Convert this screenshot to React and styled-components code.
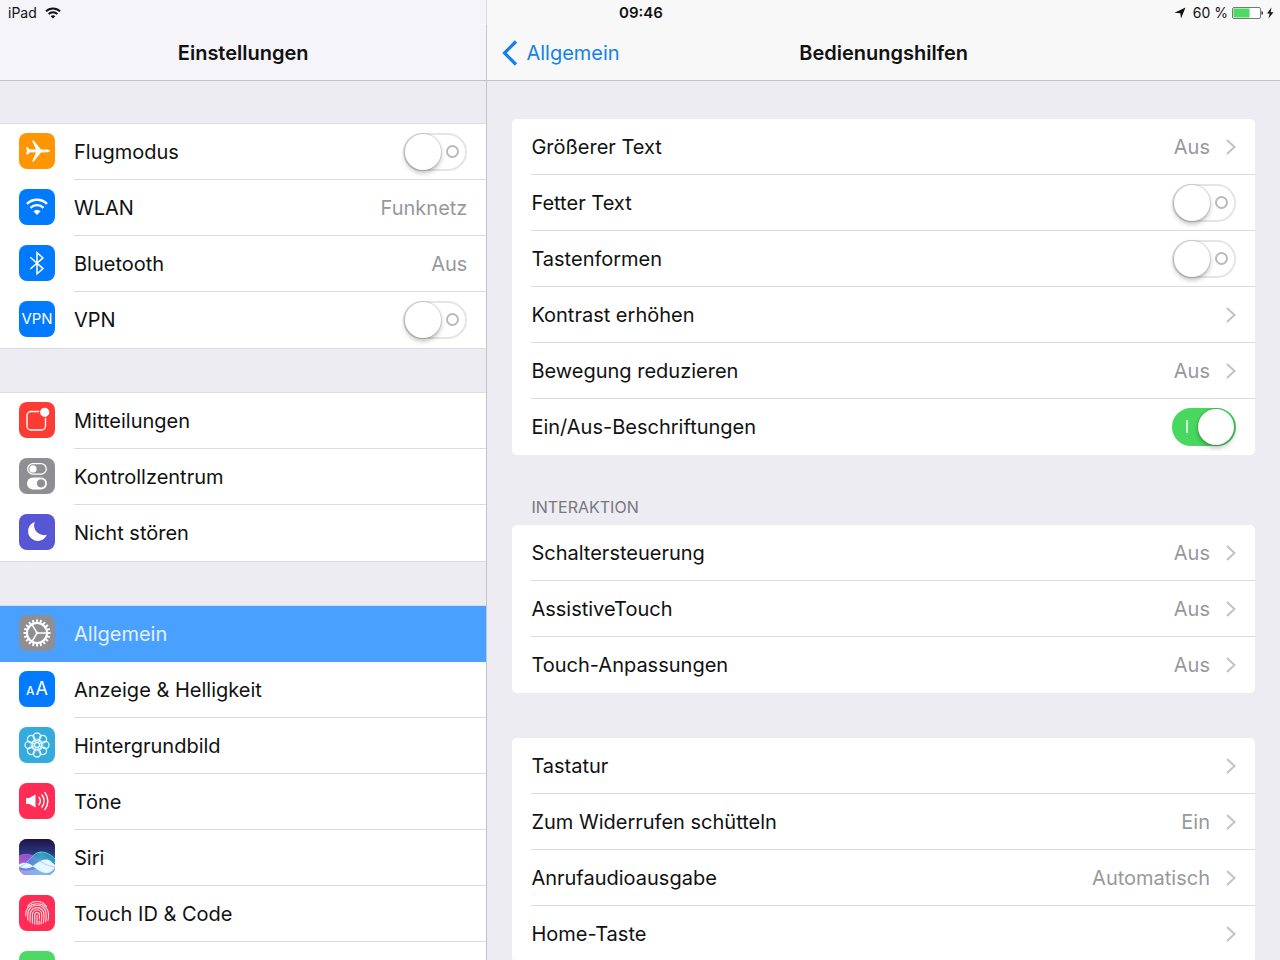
import React, { useState } from 'react';
import styled, { createGlobalStyle, css } from 'styled-components';

const GlobalStyle = createGlobalStyle`
  * {
    box-sizing: border-box;
  }
  body {
    margin: 0;
    font-family: Inter, "Liberation Sans", sans-serif;
    font-size: 20px;
    line-height: 24px;
    color: #111;
  }
`;

const Screen = styled.div`
  display: grid;
  grid-template-columns: calc(38% + 1px) minmax(0, 1fr);
  grid-template-rows: auto minmax(0, 1fr);
  height: 100vh;
  overflow: hidden;
  background: linear-gradient(
    to right,
    #f5f4f9 38%,
    #dddce2 38% calc(38% + 1px),
    #f8f8f8 calc(38% + 1px)
  );
`;

const StatusBar = styled.header`
  grid-column: 1 / -1;
  display: grid;
  grid-template-columns: 1fr auto 1fr;
  align-items: center;
  height: 25px;
  padding: 0 6px 0 8px;
  font-size: 14px;
  line-height: 24px;
`;

const StatusGroup = styled.div`
  display: flex;
  align-items: center;
  justify-content: ${(p) => (p.$end ? 'flex-end' : 'flex-start')};
  gap: ${(p) => (p.$end ? 4 : 8)}px;
`;

const Clock = styled.time`
  font-size: 15px;
  font-weight: 600;
`;

const Pane = styled.section`
  display: flex;
  flex-direction: column;
  min-width: 0;
  min-height: 0;
  ${(p) => p.$divided && css`border-right: 1px solid #c4c3c8;`}
`;

const NavBar = styled.div`
  flex: none;
  display: grid;
  grid-template-columns: 1fr auto 1fr;
  align-items: center;
  height: 56px;
  padding: 0 15px;
  border-bottom: 1px solid #c1c0c6;
`;

const Title = styled.h1`
  grid-column: 2;
  margin: 0;
  font-size: 20px;
  font-weight: 600;
  line-height: 24px;
`;

const BackLink = styled.a`
  display: flex;
  align-items: center;
  gap: 8px;
  color: #1680ea;
  text-decoration: none;
`;

const Scroller = styled.div`
  flex: 1;
  display: flex;
  flex-direction: column;
  min-height: 0;
  overflow-y: auto;
  scrollbar-width: none;
  background: #edecf2;
  gap: ${(p) => (p.$cards ? 45 : 43)}px;
  padding: ${(p) => (p.$cards ? '38px 25px' : '42px 0')};
`;

const Group = styled.div`
  flex: none;
  background: #fff;
  border: solid #dcdbe0;
  border-width: 1px 0;
`;

const CardSection = styled.div`
  flex: none;
`;

const CaptionedSection = styled(CardSection)`
  margin-top: -3px;
`;

const Card = styled.div`
  overflow: hidden;
  background: #fff;
  border-radius: 5px;
`;

const Caption = styled.h2`
  margin: 0;
  padding: 0 19px 8px;
  font-size: 16px;
  font-weight: 400;
  line-height: 20px;
  color: #77777c;
`;

const Row = styled.div`
  display: flex;
  align-items: center;
  gap: 19px;
  height: 56px;
  padding-left: 19px;
  color: ${(p) => (p.$active ? '#e2f1ff' : 'inherit')};
  background: ${(p) => (p.$active ? '#4aa0ff' : 'transparent')};
  text-decoration: none;
`;

const RowBody = styled.div`
  flex: 1;
  display: flex;
  align-items: center;
  gap: 16px;
  height: 56px;
  padding-right: 19px;
  border-bottom: 1px solid #dbdadf;
  ${Row}:last-child > & {
    border-bottom-color: transparent;
  }
  ${(p) => p.$active && css`border-bottom-color: transparent;`}
`;

const Label = styled.span`
  flex: 1;
`;

const Value = styled.span`
  color: #98989c;
`;

const Switch = styled.input`
  appearance: none;
  display: flex;
  align-items: center;
  justify-content: space-between;
  width: 64px;
  height: 38px;
  margin: 0;
  border: 2px solid #e5e5e5;
  border-radius: 19px;
  background: #fff;

  &::before,
  &::after {
    content: '';
    box-sizing: border-box;
  }

  &::before {
    width: 36px;
    height: 36px;
    border-radius: 50%;
    background: #fff;
    box-shadow: 0 0 1px 1px rgba(0, 0, 0, 0.12), 0 3px 5px rgba(0, 0, 0, 0.26);
  }

  &::after {
    width: 13px;
    height: 13px;
    margin-right: 6px;
    border: 2px solid #b9b9b9;
    border-radius: 50%;
  }

  &:checked {
    flex-direction: row-reverse;
    border-color: #49d85f;
    background: #49d85f;
  }

  &:checked::after {
    width: 2px;
    margin: 0 0 0 12px;
    border: 0;
    border-radius: 0;
    background: #d5f7da;
  }
`;

const Tile = styled.span`
  flex: none;
  display: flex;
  align-items: ${(p) => (p.$baseline ? 'baseline' : 'center')};
  justify-content: center;
  width: 36px;
  height: 36px;
  margin-bottom: 3px;
  overflow: hidden;
  border-radius: 8px;
  color: #fff;
  background: ${(p) => p.$color};
  font-size: ${(p) => (p.$baseline ? 18 : 15)}px;
  line-height: 36px;
`;

const SmallLetter = styled.span`
  margin-right: 1px;
  font-size: 12px;
  font-weight: 500;
`;

function Glyph({ children }) {
  return (
    <svg width="36" height="36" viewBox="0 0 36 36" fill="none" stroke="#fff" aria-hidden="true">
      {children}
    </svg>
  );
}

function PlaneIcon() {
  return (
    <Glyph>
      <path
        fill="#fff"
        stroke="none"
        d="M7 14.200h1.600l2.300 2.400 6.100-.2-4-9h1.800l7.200 9 6 .2c1.800.1 3 .7 3 1.300s-1.200 1.200-3 1.300l-6 .2-7.200 9h-1.800l4-9-6.100-.2-2.300 2.400H7l.9-3.700z"
      />
    </Glyph>
  );
}

function WifiIcon() {
  return (
    <Glyph>
      <path d="M8 14.800a14.300 14.300 0 0 1 20 0" strokeWidth="2.500" />
      <path d="M11.500 18.800a9.200 9.200 0 0 1 13 0" strokeWidth="2.400" />
      <path d="M14.400 22.300a5.400 5.400 0 0 1 7.200 0L18 26z" fill="#fff" stroke="none" />
    </Glyph>
  );
}

function BluetoothIcon() {
  return (
    <Glyph>
      <path d="M11.300 12.300 24 23.600l-6 5.200V7.700l6 5.200L11.300 24" strokeWidth="1.500" />
    </Glyph>
  );
}

function NoticeIcon() {
  return (
    <Glyph>
      <rect x="8" y="9.500" width="18.500" height="18.500" rx="4" strokeWidth="1.400" />
      <circle cx="25.700" cy="10.300" r="5.200" fill="#fff" stroke="#fc3c32" strokeWidth="1.200" />
    </Glyph>
  );
}

function ControlIcon() {
  return (
    <Glyph>
      <rect x="8.700" y="5.700" width="18.600" height="10.400" rx="5.200" strokeWidth="1.300" />
      <circle cx="14" cy="10.900" r="3.600" fill="#fff" stroke="none" />
      <rect x="8" y="19.400" width="20" height="12" rx="6" fill="#fff" stroke="none" />
      <circle cx="22" cy="25.400" r="4.200" fill="#8e8e93" stroke="none" />
    </Glyph>
  );
}

function MoonIcon() {
  return (
    <Glyph>
      <path
        fill="#fff"
        stroke="none"
        d="M15.800 8a9.700 9.700 0 1 0 12 12.800 9.800 9.800 0 0 1-12-12.800z"
      />
    </Glyph>
  );
}

function GearIcon() {
  const teeth = Array.from({ length: 20 }, (_, i) => i * 18);
  return (
    <Glyph>
      <circle cx="18" cy="18" r="10" strokeWidth="2" />
      {teeth.map((a) => (
        <path key={a} d="M18 7.500V4.500" strokeWidth="2" transform={`rotate(${a} 18 18)`} />
      ))}
      {[90, 210, 330].map((a) => (
        <path key={a} d="M18 17V8" strokeWidth="1.500" transform={`rotate(${a} 18 18)`} />
      ))}
      <circle cx="18" cy="18" r="1.400" fill="#fff" stroke="none" />
    </Glyph>
  );
}

function FlowerIcon() {
  const petals = Array.from({ length: 8 }, (_, i) => i * 45);
  return (
    <Glyph>
      {petals.map((a) => (
        <g key={a} transform={`rotate(${a} 18 18)`} stroke="#dff6fc">
          <circle cx="18" cy="9.700" r="3.700" strokeWidth="1.300" />
          <circle cx="18" cy="14" r="2" strokeWidth="0.800" />
        </g>
      ))}
      <circle cx="18" cy="18" r="2.600" strokeWidth="1.100" stroke="#dff6fc" />
    </Glyph>
  );
}

function SoundIcon() {
  return (
    <Glyph>
      <path d="M7 15h3.300l6.200-3.500v13L10.300 21H7z" fill="#fff" stroke="none" />
      <g strokeWidth="1.500" strokeLinecap="round">
        <path d="M20 14.400a6 6 0 0 1 0 7.200" />
        <path d="M23 12a10 10 0 0 1 0 12" />
        <path d="M26 9.600a14 14 0 0 1 0 16.800" />
      </g>
    </Glyph>
  );
}

function SiriIcon() {
  return (
    <Glyph>
      <defs>
        <linearGradient id="siriSky" x1="0" y1="0" x2="0" y2="1">
          <stop offset="0" stopColor="#1d124b" />
          <stop offset="0.400" stopColor="#2a3a7c" />
          <stop offset="0.700" stopColor="#4593cb" />
          <stop offset="1" stopColor="#a9bdf2" />
        </linearGradient>
        <linearGradient id="siriPink" x1="0" y1="0" x2="1" y2="0">
          <stop offset="0" stopColor="#d04be0" />
          <stop offset="0.600" stopColor="#765bd8" />
          <stop offset="1" stopColor="#4d78df" stopOpacity="0.300" />
        </linearGradient>
        <linearGradient id="siriAqua" x1="0" y1="0" x2="1" y2="0">
          <stop offset="0" stopColor="#4c87e0" stopOpacity="0.500" />
          <stop offset="0.600" stopColor="#3fc5dd" />
          <stop offset="1" stopColor="#2a9bd0" />
        </linearGradient>
      </defs>
      <g stroke="none">
        <path d="M0 0h36v36H0z" fill="url(#siriSky)" />
        <path d="M0 17c6-3 12-2 17 2s11 8 19 9v8H0z" fill="url(#siriPink)" opacity="0.800" />
        <path d="M0 28c8-1 13-15 22-15 6 0 10 3 14 7v16H0z" fill="url(#siriAqua)" opacity="0.700" />
        <path d="M0 30c9 5 16-3 36-1v7H0z" fill="#9db8f3" opacity="0.700" />
        <path
          d="M0 25.500c5-3 9-1.500 14 1.500C19 23 23 20.500 27 20.500c4 0 6 2.500 9 5.500v3c-3 3-5 5-9 5s-8-3-13-6.500C9 30 5 30 0 28z"
          fill="#e0fbff"
        />
      </g>
      <path d="M0 17c6-3 12-2 17 2s11 8 19 9" stroke="#df70ee" strokeWidth="0.700" opacity="0.700" />
      <path d="M0 28c8-1 13-15 22-15 6 0 10 3 14 7" stroke="#62e5f0" strokeWidth="0.800" />
    </Glyph>
  );
}

function FingerprintIcon() {
  return (
    <Glyph>
      <g stroke="#ffdce3" strokeWidth="1.100" strokeLinecap="round">
        <path d="M8.500 11.500C13 4.800 23 4.800 27.500 11.500" />
        <path d="M6.800 21c-1.500-16 23.900-16.500 22.700 0 0 1.500-.2 3-.5 4.500" />
        <path d="M8.800 25v-5c0-13 18.400-13 18.400 0 0 3-.2 5-.7 7" />
        <path d="M11.100 27v-7c0-9.800 13.900-9.800 13.900 0 0 3.500-.2 6-.8 8" />
        <path d="M13.400 28.200V20c0-6.600 9.400-6.600 9.400 0 0 3.500-.2 6.500-.8 9" />
        <path d="M15.700 29v-9c0-3.300 4.800-3.300 4.800 0 0 1.500 0 2.800-.2 4" />
        <path d="M18 20v9.300M20.200 26l-.2 3.300" />
      </g>
    </Glyph>
  );
}

function BatteryIcon() {
  return (
    <Glyph>
      <rect x="7" y="12" width="20" height="12" rx="2" strokeWidth="1.500" />
      <path d="M9 14h13v8H9zM28 16h2v4h-2z" fill="#fff" stroke="none" />
    </Glyph>
  );
}

function Chevron() {
  return (
    <svg width="10" height="16" viewBox="0 0 10 16" fill="none" stroke="#c3c3c7" aria-hidden="true">
      <path d="M1 1l7.500 7L1 15" strokeWidth="2" />
    </svg>
  );
}

const deviceItems = [
  [
    { label: 'Flugmodus', color: '#ff9500', icon: <PlaneIcon />, toggle: false },
    { label: 'WLAN', color: '#007aff', icon: <WifiIcon />, value: 'Funknetz' },
    { label: 'Bluetooth', color: '#007aff', icon: <BluetoothIcon />, value: 'Aus' },
    { label: 'VPN', color: '#007aff', icon: 'VPN', toggle: false },
  ],
  [
    { label: 'Mitteilungen', color: '#fc3c32', icon: <NoticeIcon /> },
    { label: 'Kontrollzentrum', color: '#8e8e93', icon: <ControlIcon /> },
    { label: 'Nicht stören', color: '#5756d5', icon: <MoonIcon /> },
  ],
  [
    { label: 'Allgemein', color: '#8e8e93', icon: <GearIcon />, active: true },
    {
      label: 'Anzeige & Helligkeit',
      color: '#007aff',
      baseline: true,
      icon: <><SmallLetter>A</SmallLetter>A</>,
    },
    { label: 'Hintergrundbild', color: '#35aadc', icon: <FlowerIcon /> },
    { label: 'Töne', color: '#ff2d55', icon: <SoundIcon /> },
    { label: 'Siri', color: '#25457c', icon: <SiriIcon /> },
    { label: 'Touch ID & Code', color: '#ff2d55', icon: <FingerprintIcon /> },
    { label: '', color: '#4cd964', icon: <BatteryIcon /> },
  ],
];

const accessibilityItems = [
  {
    rows: [
      { label: 'Größerer Text', value: 'Aus', chevron: true },
      { label: 'Fetter Text', toggle: false },
      { label: 'Tastenformen', toggle: false },
      { label: 'Kontrast erhöhen', chevron: true },
      { label: 'Bewegung reduzieren', value: 'Aus', chevron: true },
      { label: 'Ein/Aus-Beschriftungen', toggle: true },
    ],
  },
  {
    caption: 'INTERAKTION',
    rows: [
      { label: 'Schaltersteuerung', value: 'Aus', chevron: true },
      { label: 'AssistiveTouch', value: 'Aus', chevron: true },
      { label: 'Touch-Anpassungen', value: 'Aus', chevron: true },
    ],
  },
  {
    rows: [
      { label: 'Tastatur', chevron: true },
      { label: 'Zum Widerrufen schütteln', value: 'Ein', chevron: true },
      { label: 'Anrufaudioausgabe', value: 'Automatisch', chevron: true },
      { label: 'Home-Taste', chevron: true },
    ],
  },
];

function SettingRow({ item }) {
  const [on, setOn] = useState(item.toggle);
  const isSwitch = item.toggle !== undefined;
  const rowProps = isSwitch ? { as: 'label' } : { as: 'a', href: '#' };

  return (
    <Row {...rowProps} $active={item.active} aria-current={item.active ? 'page' : undefined}>
      {item.icon && (
        <Tile $color={item.color} $baseline={item.baseline} aria-hidden="true">
          {item.icon}
        </Tile>
      )}
      <RowBody $active={item.active}>
        <Label>{item.label}</Label>
        {item.value && <Value>{item.value}</Value>}
        {isSwitch && (
          <Switch type="checkbox" role="switch" checked={on} onChange={(e) => setOn(e.target.checked)} />
        )}
        {item.chevron && <Chevron />}
      </RowBody>
    </Row>
  );
}

export default function App() {
  return (
    <Screen>
      <GlobalStyle />
      <StatusBar>
        <StatusGroup>
          <span>iPad</span>
          <svg width="16" height="12" viewBox="0 0 16 12" fill="none" stroke="#111" aria-hidden="true">
            <path d="M1 4.300a10 10 0 0 1 14 0" strokeWidth="1.900" />
            <path d="M3.600 7a6.400 6.400 0 0 1 8.800 0" strokeWidth="1.800" />
            <path d="M5.700 9.200a3.400 3.400 0 0 1 4.600 0L8 11.500z" fill="#111" stroke="none" />
          </svg>
        </StatusGroup>
        <Clock>09:46</Clock>
        <StatusGroup $end>
          <svg width="16" height="12" viewBox="0 0 16 12" aria-hidden="true">
            <path d="M12.500.5 8 11.500 7.300 6.300 1.500 5.700z" fill="#111" />
          </svg>
          <span>60 %</span>
          <svg width="42" height="12" viewBox="0 0 42 12" aria-hidden="true">
            <rect x="0.500" y="0.500" width="28" height="11" rx="1.500" fill="#fff" stroke="#77777a" />
            <path d="M1.500 1.500h16v9h-16z" fill="#4cd964" />
            <path d="M29.500 4c2 .3 2 3.700 0 4z" fill="#333" />
            <path d="M39.500.500 35 6.600h2.700L36.500 11.500 41.500 5.200h-2.900z" fill="#111" />
          </svg>
        </StatusGroup>
      </StatusBar>

      <Pane $divided as="nav">
        <NavBar>
          <Title>Einstellungen</Title>
        </NavBar>
        <Scroller>
          {deviceItems.map((group, i) => (
            <Group key={i}>
              {group.map((item) => (
                <SettingRow key={item.label} item={item} />
              ))}
            </Group>
          ))}
        </Scroller>
      </Pane>

      <Pane as="main">
        <NavBar>
          <BackLink href="#">
            <svg width="16" height="26" viewBox="0 0 16 26" fill="none" stroke="#1680ea" aria-hidden="true">
              <path d="M14 1.500 2.500 13 14 24.500" strokeWidth="3.200" />
            </svg>
            Allgemein
          </BackLink>
          <Title>Bedienungshilfen</Title>
        </NavBar>
        <Scroller $cards>
          {accessibilityItems.map((section, i) => {
            const Section = section.caption ? CaptionedSection : CardSection;
            return (
              <Section key={i}>
                {section.caption && <Caption>{section.caption}</Caption>}
                <Card>
                  {section.rows.map((item) => (
                    <SettingRow key={item.label} item={item} />
                  ))}
                </Card>
              </Section>
            );
          })}
        </Scroller>
      </Pane>
    </Screen>
  );
}
